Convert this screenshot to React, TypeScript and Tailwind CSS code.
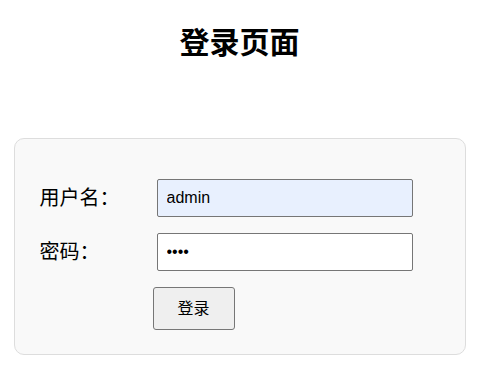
const font = { fontFamily: '"Liberation Sans", "Noto Sans CJK SC", sans-serif' };

export default function App() {
  return (
    <div className="min-h-screen bg-white text-black" style={font}>
      <h1 className="pt-[24px] text-center text-[30px] font-bold leading-[38px]">登录页面</h1>

      <form
        className="mx-auto mt-[76px] w-[452px] rounded-[10px] border border-[#dddddd] bg-[#f9f9f9] px-[25px] pt-[40px] pb-[24px]"
        onSubmit={(e) => e.preventDefault()}
      >
        <div className="flex items-center">
          <label className="w-[117px] text-[20px]">用户名：</label>
          <input
            type="text"
            defaultValue="admin"
            className="h-[38px] w-[256px] rounded-[2px] border border-[#767676] bg-[#e8f0fe] px-[9px] text-[16px] outline-none"
          />
        </div>

        <div className="mt-[16px] flex items-center">
          <label className="w-[117px] text-[20px]">密码：</label>
          <input
            type="password"
            defaultValue="1234"
            className="h-[38px] w-[256px] rounded-[2px] border border-[#767676] bg-white px-[9px] text-[16px] outline-none"
          />
        </div>

        <div className="mt-[16px] pl-[113px]">
          <button
            type="submit"
            className="h-[43px] w-[82px] rounded-[3px] border border-[#767676] bg-[#efefef] text-[16px]"
          >
            登录
          </button>
        </div>
      </form>
    </div>
  );
}
